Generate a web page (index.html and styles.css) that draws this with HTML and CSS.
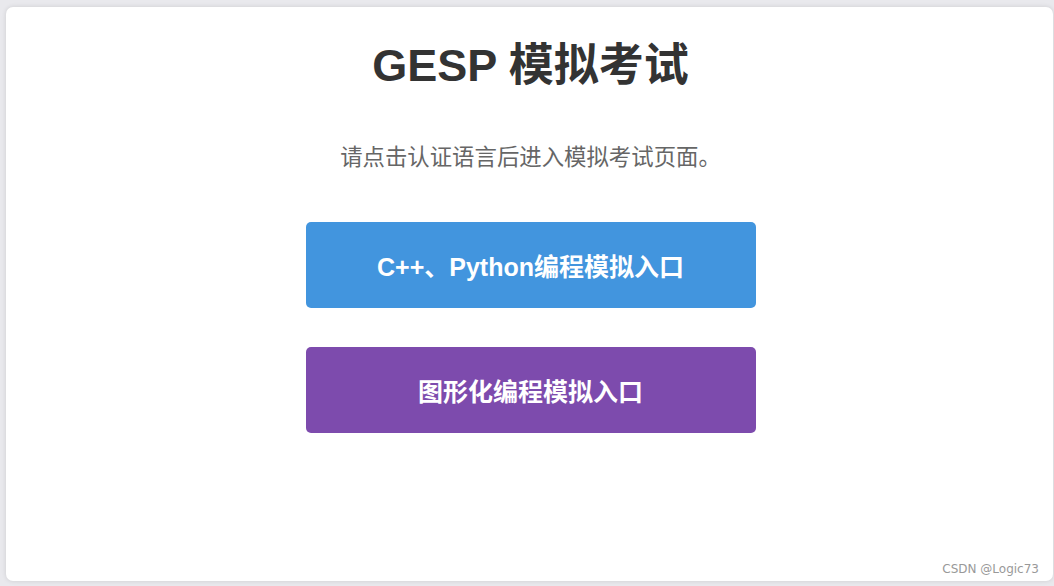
FILE: index.html
```html
<!DOCTYPE html>
<html lang="zh-CN">
<head>
	<meta charset="UTF-8">
	<meta name="viewport" content="width=device-width, initial-scale=1">
	<title>GESP 模拟考试</title>
	<link rel="stylesheet" href="styles.css">
</head>
<body>
	<!-- Main card -->
	<div class="container">
		<h1>GESP 模拟考试</h1>
		<p class="intro">请点击认证语言后进入模拟考试页面。</p>
		<div class="buttonBlock">
			<a class="entry entry-code" href="#">C++、Python编程模拟入口</a>
			<a class="entry entry-graphic" href="#">图形化编程模拟入口</a>
		</div>
		<span class="watermark">CSDN @Logic73</span>
	</div>
</body>
</html>
```

FILE: styles.css
```css
* {
	box-sizing: border-box;
}
html {
	width: 100%;
	height: 100%;
	margin: 0;
	padding: 0;
	background-color: #e9e9ed;
}
body {
	margin: 0;
	padding: 7px 1px 5px 6px;
	font-family: "Liberation Sans", "Noto Sans CJK SC", sans-serif;
}
.container {
	position: relative;
	height: 574px;
	background: #fff;
	border-radius: 7px;
	box-shadow: 0 0 5px rgba(0, 0, 0, 0.12);
	padding: 32px 19px 32px 21px;
	text-align: center;
}
h1 {
	margin: 0;
	font-size: 45px;
	line-height: 54px;
	font-weight: bold;
	color: #333;
}
.intro {
	margin: 48px 0 0 0;
	font-size: 22.4px;
	line-height: 33px;
	color: #666;
}
.buttonBlock {
	display: flex;
	flex-direction: column;
	align-items: center;
	gap: 39px;
	margin-top: 48px;
}
.entry {
	display: flex;
	justify-content: center;
	align-items: center;
	width: 450px;
	height: 86px;
	border-radius: 5px;
	color: #fff;
	font-size: 25px;
	font-weight: bold;
	text-decoration: none;
}
.entry-code {
	background: #4295de;
}
.entry-graphic {
	background: #7d4bad;
}
.watermark {
	position: absolute;
	right: 14px;
	bottom: 5px;
	font-family: "DejaVu Sans", sans-serif;
	font-size: 12px;
	color: #999;
}
```
